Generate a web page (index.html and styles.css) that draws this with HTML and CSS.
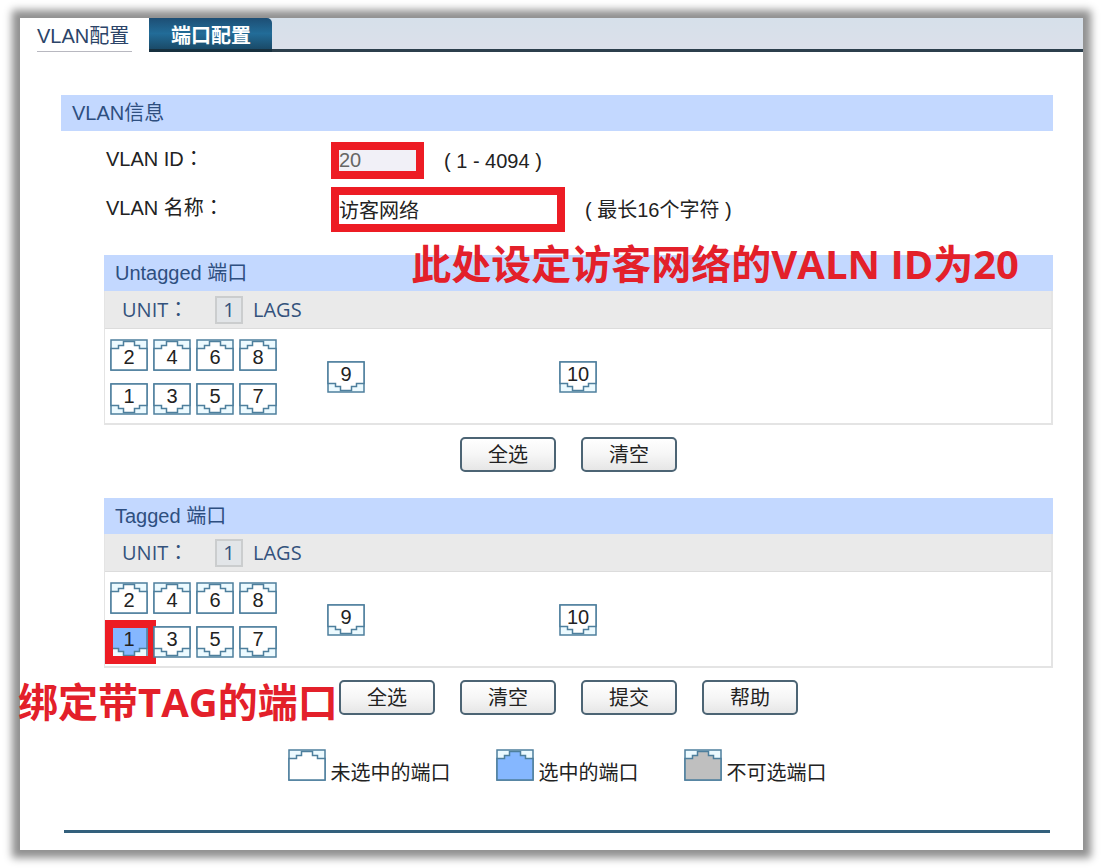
FILE: index.html
```html
<!DOCTYPE html>
<html lang="zh-CN">
<head>
<meta charset="utf-8">
<title>VLAN配置</title>
<link rel="stylesheet" href="styles.css">
</head>
<body>
<svg class="defs" aria-hidden="true">
  <symbol id="port-up" viewBox="0 0 38 32">
    <rect class="shell" x="1" y="1" width="36" height="30"/>
    <path class="body" d="M1 9.500H8.500V6.500H13.500V2.500H24.500V6.500H29.500V9.500H37V31H1Z"/>
  </symbol>
  <symbol id="port-down" viewBox="0 0 38 32">
    <rect class="shell" x="1" y="1" width="36" height="30"/>
    <path class="body" d="M1 22.500H8.500V25.500H13.500V29.500H24.500V25.500H29.500V22.500H37V1H1Z"/>
  </symbol>
</svg>
<main class="screen">
  <nav class="tabs">
    <a class="tab tab-current" href="#vlan"><span>VLAN配置</span></a>
    <a class="tab" href="#ports">端口配置</a>
  </nav>
  <form class="content" id="vlan">
    <h2 class="bar">VLAN信息</h2>
    <div class="fields">
      <div class="field">
        <label for="vid">VLAN ID<span class="colon" lang="zh-Hant">：</span></label>
        <span class="marked marked-id"><input id="vid" type="text" value="20" readonly></span>
        <span class="hint">( 1 - 4094 )</span>
      </div>
      <div class="field">
        <label for="vname">VLAN 名称<span class="colon" lang="zh-Hant">：</span></label>
        <span class="marked marked-name"><input id="vname" type="text" value="访客网络"></span>
        <span class="hint">( 最长16个字符 )</span>
      </div>
    </div>

    <section class="panel">
      <h3 class="bar">Untagged 端口</h3>
      <p class="note note-id">此处设定访客网络的VALN ID为20</p>
      <div class="unit"><span class="unit-label">UNIT<span class="colon" lang="zh-Hant">：</span></span><button type="button" class="unit-no">1</button><a href="#lags">LAGS</a></div>
      <div class="ports">
        <div class="bank">
          <button type="button" class="port up"><svg><use href="#port-up"/></svg><span>2</span></button>
          <button type="button" class="port up"><svg><use href="#port-up"/></svg><span>4</span></button>
          <button type="button" class="port up"><svg><use href="#port-up"/></svg><span>6</span></button>
          <button type="button" class="port up"><svg><use href="#port-up"/></svg><span>8</span></button>
          <button type="button" class="port"><svg><use href="#port-down"/></svg><span>1</span></button>
          <button type="button" class="port"><svg><use href="#port-down"/></svg><span>3</span></button>
          <button type="button" class="port"><svg><use href="#port-down"/></svg><span>5</span></button>
          <button type="button" class="port"><svg><use href="#port-down"/></svg><span>7</span></button>
        </div>
        <div class="uplinks">
          <button type="button" class="port"><svg><use href="#port-down"/></svg><span>9</span></button>
          <button type="button" class="port"><svg><use href="#port-down"/></svg><span>10</span></button>
        </div>
      </div>
    </section>
    <div class="actions">
      <button type="button" class="btn">全选</button>
      <button type="button" class="btn">清空</button>
    </div>

    <section class="panel">
      <h3 class="bar">Tagged 端口</h3>
      <div class="unit"><span class="unit-label">UNIT<span class="colon" lang="zh-Hant">：</span></span><button type="button" class="unit-no">1</button><a href="#lags">LAGS</a></div>
      <div class="ports">
        <div class="bank">
          <button type="button" class="port up"><svg><use href="#port-up"/></svg><span>2</span></button>
          <button type="button" class="port up"><svg><use href="#port-up"/></svg><span>4</span></button>
          <button type="button" class="port up"><svg><use href="#port-up"/></svg><span>6</span></button>
          <button type="button" class="port up"><svg><use href="#port-up"/></svg><span>8</span></button>
          <button type="button" class="port selected"><svg><use href="#port-down"/></svg><span>1</span></button>
          <button type="button" class="port"><svg><use href="#port-down"/></svg><span>3</span></button>
          <button type="button" class="port"><svg><use href="#port-down"/></svg><span>5</span></button>
          <button type="button" class="port"><svg><use href="#port-down"/></svg><span>7</span></button>
        </div>
        <div class="uplinks">
          <button type="button" class="port"><svg><use href="#port-down"/></svg><span>9</span></button>
          <button type="button" class="port"><svg><use href="#port-down"/></svg><span>10</span></button>
        </div>
      </div>
      <p class="note note-tag">绑定带TAG的端口</p>
    </section>
    <div class="actions">
      <button type="button" class="btn">全选</button>
      <button type="button" class="btn">清空</button>
      <button type="submit" class="btn">提交</button>
      <button type="button" class="btn">帮助</button>
    </div>

    <ul class="legend">
      <li><svg class="icon"><use href="#port-up"/></svg><span>未选中的端口</span></li>
      <li class="selected-key"><svg class="icon"><use href="#port-up"/></svg><span>选中的端口</span></li>
      <li class="disabled-key"><svg class="icon"><use href="#port-up"/></svg><span>不可选端口</span></li>
    </ul>
    <hr class="end">
  </form>
</main>
</body>
</html>
```
FILE: styles.css
```css
* { box-sizing: border-box; }

body {
  margin: 0;
  padding: 18px 20px;
  background: #fff;
  color: #222;
  font: 20px/24px "Liberation Sans", "Noto Sans CJK SC", sans-serif;
}

button, input { font: inherit; color: inherit; }
h2, h3, p, ul { margin: 0; padding: 0; font-weight: 400; font-size: 20px; }
a { color: inherit; text-decoration: none; }

.defs { position: absolute; width: 0; height: 0; }

.screen {
  background: #fff;
  box-shadow: 0 0 8px 8px #909090;
}

/* Tabs */
.tabs {
  display: flex;
  height: 34px;
  background: linear-gradient(#d6e0ea, #dbe0ea);
  border-bottom: 3px solid #2c3f4c;
}
.tab {
  height: 34px;
  padding: 6px 21px 0 22px;
  color: #fff;
  font-weight: 700;
  background: linear-gradient(#1d4e74, #226c98 50%, #1a4a68);
  border-bottom: 3px solid #17303f;
  border-top-right-radius: 5px;
}
.tab-current {
  width: 129px;
  padding: 6px 17px 0;
  color: #2c4468;
  font-weight: 400;
  background: #fff;
  border: 0;
  border-radius: 0;
}
.tab-current span {
  display: block;
  height: 28px;
  white-space: nowrap;
  border-bottom: 1px solid #b8b8c0;
}

/* Form */
.content { padding: 43px 30px 17px 41px; }
.bar {
  height: 36px;
  padding: 6px 11px;
  color: #2e4f80;
  background: #c3d8ff;
}
.fields {
  display: grid;
  gap: 8px;
  padding: 11px 0 23px 45px;
}
.field {
  display: flex;
  align-items: center;
}
.field label { width: 225px; padding-bottom: 4px; }
.colon { font-family: "Noto Sans CJK TC", sans-serif; line-height: 1; }
.hint { margin-left: 20px; white-space: nowrap; }
.marked {
  display: flex;
  border: 8px solid #ed1c24;
}
.marked-id { width: 93px; height: 37px; }
.marked-name { width: 234px; height: 45px; }
.marked input {
  width: 100%;
  min-width: 0;
  height: 100%;
  padding: 0;
  border: 0;
  outline: 0;
  background: #fff;
}
.marked-id input { color: #666; background: #f1f0f7; }

/* Port panels */
.panel {
  position: relative;
  margin-left: 43px;
  border: solid #e4e4e4;
  border-width: 0 2px 2px 1px;
}
.panel .bar { margin: 0 -2px 0 -1px; }
.unit {
  display: flex;
  align-items: center;
  height: 38px;
  padding-left: 17px;
  color: #34527c;
  background: #eaeaea;
  border-bottom: 1px solid #dcdcdc;
  font-family: "Open Sans", "Noto Sans CJK SC", sans-serif;
}
.unit-label { width: 93px; }
.unit-no {
  width: 28px;
  height: 28px;
  margin-right: 10px;
  padding: 0;
  line-height: 22px;
  background: #e2e5e8;
  border: 2px solid #cbcdce;
}
.ports {
  display: flex;
  align-items: center;
  padding: 10px 5px 8px;
}
.bank {
  display: grid;
  grid-template-columns: repeat(4, 38px);
  gap: 12px 5px;
}
.uplinks {
  display: flex;
  gap: 194px;
  margin-left: 50px;
}
.port {
  position: relative;
  display: grid;
  width: 38px;
  height: 32px;
  padding: 0;
  background: none;
  border: 0;
}
.port svg, .port span { grid-area: 1 / 1; }
.port svg { width: 38px; height: 32px; }
.port span { align-self: start; line-height: 27px; }
.port.up span { align-self: end; }
.shell, .body { stroke: #4e7f9d; stroke-width: 1.5; }
.shell { fill: #ecfaff; }
.body { fill: var(--port-fill, #fff); }
.selected, .selected-key { --port-fill: #85b7ff; }
.disabled-key { --port-fill: #bfbfbf; }
.port.selected::after {
  content: "";
  position: absolute;
  inset: -6px -8px -6px -5px;
  border: 8px solid #ed1c24;
}

/* Buttons */
.actions {
  display: flex;
  justify-content: center;
  gap: 25px;
  padding: 12px 20px 26px 43px;
}
.btn {
  width: 96px;
  height: 35px;
  padding: 0;
  background: linear-gradient(#fff, #f6f6f6 50%, #e6e6e6);
  border: 2px solid #4c6474;
  border-radius: 5px;
}

/* Legend */
.legend {
  display: flex;
  justify-content: center;
  gap: 45px;
  padding-top: 8px;
  list-style: none;
}
.legend li { display: flex; gap: 5px; }
.legend span { padding-top: 12px; }
.icon { width: 38px; height: 32px; }
.end {
  height: 3px;
  margin: 45px 3px 0;
  background: #33607c;
  border: 0;
}

/* Red annotations over the form */
.note {
  position: absolute;
  z-index: 1;
  color: #e3202a;
  font: 700 40px/48px "Open Sans", "Noto Sans CJK SC", sans-serif;
  white-space: nowrap;
}
.note-id { top: -15px; right: 32px; }
.note-tag { bottom: -60px; left: -87px; }
```
